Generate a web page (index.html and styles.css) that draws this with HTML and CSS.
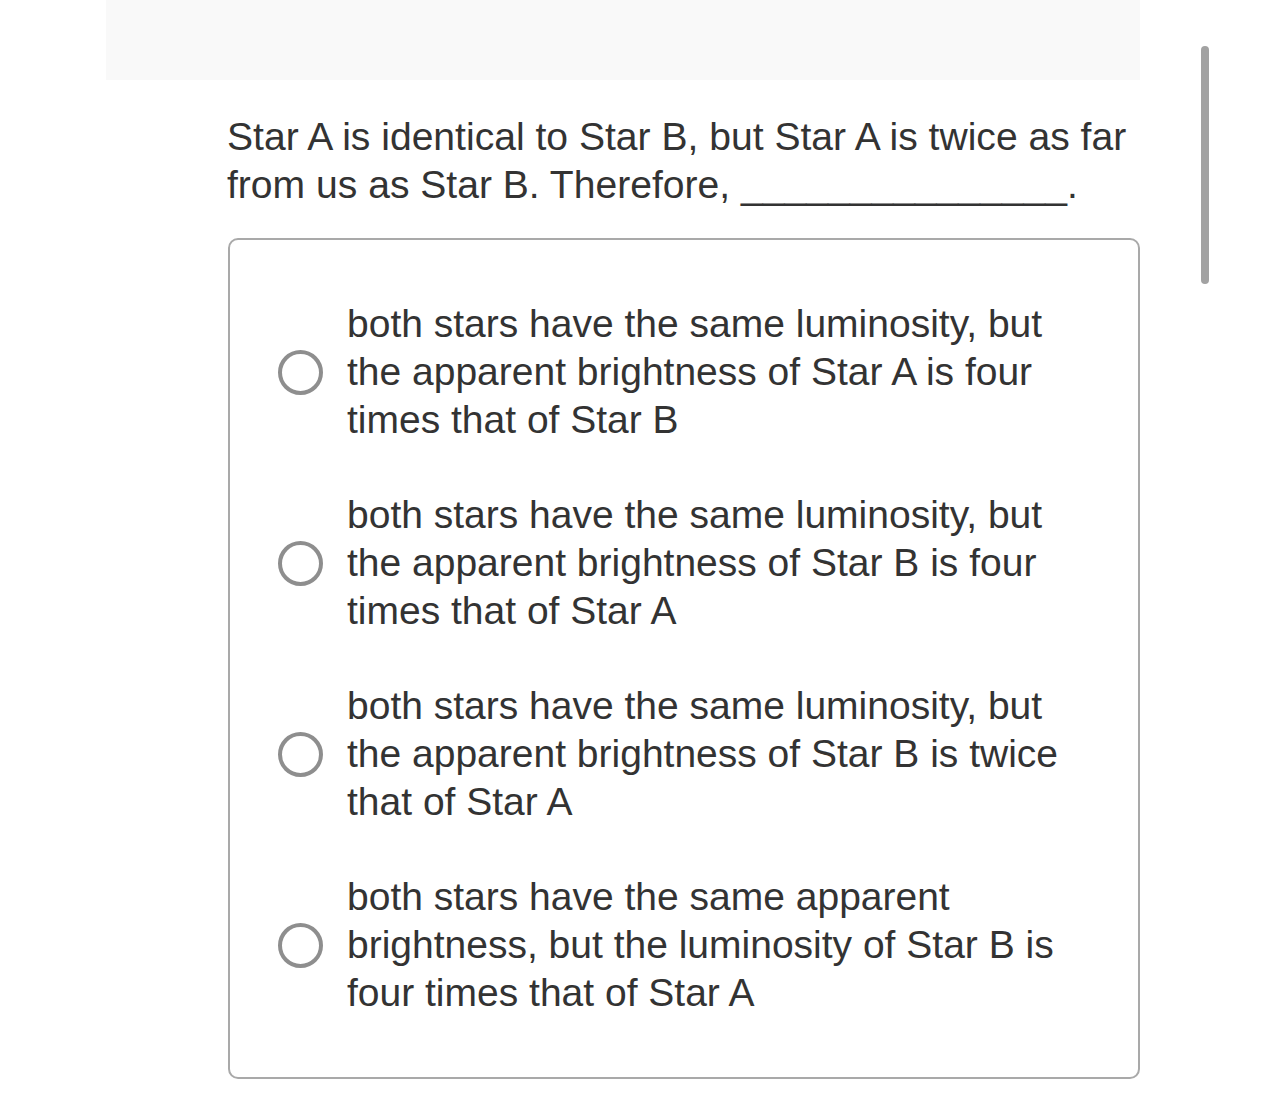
FILE: index.html
```html
<!DOCTYPE html>
<html>
<head>
<meta charset="utf-8">
<link rel="stylesheet" href="styles.css">
</head>
<body>
<div class="page">
  <div class="topband"></div>
  <div class="content">
    <p class="question">Star A is identical to Star B, but Star A is twice as far from us as Star B. Therefore, _______________.</p>
    <div class="choices">
      <label class="choice"><span class="radio"></span><span class="text">both stars have the same luminosity, but the apparent brightness of Star A is four times that of Star B</span></label>
      <label class="choice"><span class="radio"></span><span class="text">both stars have the same luminosity, but the apparent brightness of Star B is four times that of Star A</span></label>
      <label class="choice"><span class="radio"></span><span class="text">both stars have the same luminosity, but the apparent brightness of Star B is twice that of Star A</span></label>
      <label class="choice"><span class="radio"></span><span class="text">both stars have the same apparent brightness, but the luminosity of Star B is four times that of Star A</span></label>
    </div>
  </div>
  <div class="scrollbar"></div>
</div>
</body>
</html>
```
FILE: styles.css
```css
html, body {
  margin: 0;
  padding: 0;
  background: #ffffff;
}
.page {
  position: relative;
  width: 1279px;
  height: 1093px;
  overflow: hidden;
  font-family: "Liberation Sans", Arial, Helvetica, sans-serif;
  color: #333333;
}
.topband {
  margin-left: 106px;
  width: 1034px;
  height: 80px;
  background: #f9f9f9;
}
.content {
  margin-left: 227px;
  width: 913px;
}
.question {
  margin: 33px 0 0 0;
  font-size: 39.1px;
  line-height: 48px;
}
.choices {
  margin-top: 29px;
  margin-left: 1px;
  box-sizing: border-box;
  width: 912px;
  height: 841px;
  border: 2.5px solid #a9a9a9;
  border-radius: 10px;
  padding: 60px 0 0 0;
  display: flex;
  flex-direction: column;
  gap: 47px;
}
.choice {
  display: flex;
  align-items: center;
  padding-left: 48px;
}
.radio {
  flex: none;
  box-sizing: border-box;
  width: 45px;
  height: 45px;
  border: 4px solid #8e8e8e;
  border-radius: 50%;
  margin-right: 24px;
}
.text {
  font-size: 39px;
  line-height: 48px;
  width: 740px;
}
.scrollbar {
  position: absolute;
  left: 1201px;
  top: 46px;
  width: 8px;
  height: 238px;
  border-radius: 4px;
  background: #a2a2a2;
}
```
